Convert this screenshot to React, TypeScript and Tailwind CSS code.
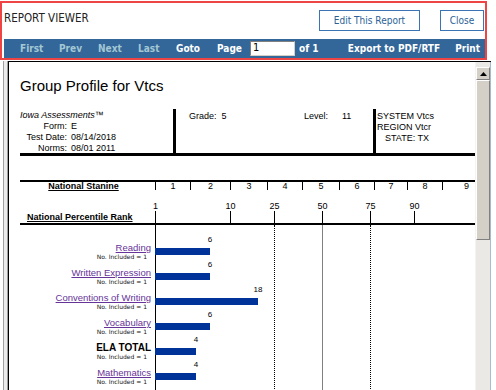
import React from "react";

const ui = "font-['DejaVu_Sans_Condensed','DejaVu_Sans',sans-serif] font-stretch-condensed";

const stanineCells = [
  { n: "1", w: 35 },
  { n: "2", w: 40 },
  { n: "3", w: 37 },
  { n: "4", w: 35 },
  { n: "5", w: 37 },
  { n: "6", w: 35 },
  { n: "7", w: 33 },
  { n: "8", w: 35 },
  { n: "9", w: 33 },
];

// x is the page position minus the left edge of the scale row (20px)
const percentileTicks = [
  { n: "1", x: 135 },
  { n: "10", x: 210 },
  { n: "25", x: 254 },
  { n: "50", x: 302 },
  { n: "75", x: 350 },
  { n: "90", x: 394 },
];

const scores = [
  { name: "Reading", value: 6, bar: 55, link: true },
  { name: "Written Expression", value: 6, bar: 55, link: true },
  { name: "Conventions of Writing", value: 18, bar: 103, link: true },
  { name: "Vocabulary", value: 6, bar: 55, link: true },
  { name: "ELA TOTAL", value: 4, bar: 41, link: false },
  { name: "Mathematics", value: 4, bar: 41, link: true },
];

const InfoRow = ({ label, value }: { label: string; value: string }) => (
  <div className="flex">
    <span className="w-[47px] text-right">{label}</span>
    <span className="pl-[4px]">{value}</span>
  </div>
);

const Toolbar = () => (
  <nav className={`ml-[2px] h-[19px] bg-[#336699] flex items-center text-[10px] font-bold ${ui}`}>
    <span className="ml-[16px] w-[39px] text-[#a3c8d4]">First</span>
    <span className="w-[39px] text-[#a3c8d4]">Prev</span>
    <span className="w-[40px] text-[#a3c8d4]">Next</span>
    <span className="w-[38px] text-[#a3c8d4]">Last</span>
    <span className="w-[41px] text-white">Goto</span>
    <span className="w-[33px] text-white">Page</span>
    <input
      defaultValue="1"
      className="w-[45px] h-[15px] bg-white border border-t-[#808080] border-l-[#808080] border-r-[#d4d0c8] border-b-[#d4d0c8] px-[2px] text-[11px] font-normal text-black outline-none"
    />
    <span className="ml-[4px] text-white">of 1</span>
    <span className="flex-1" />
    <span className="text-white">Export to PDF/RTF</span>
    <span className="ml-[15px] mr-[5px] text-white">Print</span>
  </nav>
);

const Scrollbar = () => (
  <div className="w-[15px] bg-[#ebe9e5] flex flex-col pt-[5px] border-l border-[#f4f3f1]">
    <div className="h-[13px] bg-[#d4d0c8] border border-t-white border-l-white border-r-[#808080] border-b-[#808080] flex items-center justify-center">
      <svg width="7" height="4" viewBox="0 0 7 4">
        <path d="M3.5 0 L7 4 L0 4 Z" fill="#000" />
      </svg>
    </div>
    <div className="h-[160px] bg-[#d4d0c8] border border-t-white border-l-white border-r-[#808080] border-b-[#808080]" />
  </div>
);

const Report = () => (
  <div className="w-[466px] h-[328px] relative overflow-hidden bg-white text-black font-['Liberation_Sans',Arial,sans-serif]">
    <div className="pt-[15px] pl-[11px] text-[15px] leading-[18px]">Group Profile for Vtcs</div>

    <div className="mt-[14px] ml-[11px] h-[47px] flex border-b-[3px] border-black text-[9px] leading-[11px]">
      <div className="w-[153px] pt-[1px]">
        <div className="italic">Iowa Assessments™</div>
        <InfoRow label="Form:" value="E" />
        <InfoRow label="Test Date:" value="08/14/2018" />
        <InfoRow label="Norms:" value="08/01 2011" />
      </div>
      <div className="w-[3px] bg-black" />
      <div className="w-[197px] pt-[2px] pl-[13px] flex">
        <span className="w-[115px]">Grade:&nbsp; 5</span>
        <span className="w-[38px]">Level:</span>
        <span>11</span>
      </div>
      <div className="w-[3px] bg-black" />
      <div className="flex-1 pl-[1px] pt-[2px]">
        <div>SYSTEM Vtcs</div>
        <div>REGION Vtcr</div>
        <div className="pl-[8px]">STATE: TX</div>
      </div>
    </div>

    <div className="mt-[24px] ml-[11px] border-t-2 border-black h-[10px] flex text-[9px] leading-[8px]">
      <div className="w-[127px] text-center font-bold underline">National Stanine</div>
      <div className="w-[8px]" />
      {stanineCells.map((c, i) => (
        <div
          key={c.n}
          className={`h-[8px] border-l border-black ${i === stanineCells.length - 1 ? "text-right pr-[6px]" : "text-center"}`}
          style={{ width: c.w }}
        >
          {c.n}
        </div>
      ))}
    </div>

    <div className="ml-[11px] h-[35px] relative border-b-2 border-black text-[9px] leading-[10px]">
      <div className="absolute left-[7px] top-[22px] font-bold underline">National Percentile Rank</div>
      {percentileTicks.map((t) => (
        <React.Fragment key={t.n}>
          <span className="absolute top-[11px] -translate-x-1/2" style={{ left: t.x + 0.5 }}>
            {t.n}
          </span>
          <div className="absolute top-[21px] h-[12px] w-px bg-black" style={{ left: t.x }} />
        </React.Fragment>
      ))}
    </div>

    <div className="relative h-[200px]">
      <div className="absolute left-[146px] top-0 bottom-0 w-px bg-black" />
      <div className="absolute left-[265px] top-0 bottom-0 border-l border-dotted border-black" />
      <div className="absolute left-[313px] top-0 bottom-0 w-px bg-[#808080]" />
      <div className="absolute left-[361px] top-0 bottom-0 border-l border-dotted border-black" />

      <div className="relative flex flex-col pt-[10px]">
        {scores.map((s) => (
          <div key={s.name} className="h-[25px] flex">
            <div className="w-[142px] flex flex-col items-end">
              <span
                className={`pt-[8px] leading-[10px] ${
                  s.link ? "text-[9.5px] text-[#663399] underline" : "text-[10px] font-bold text-black"
                }`}
              >
                {s.name}
              </span>
              <span className="pr-[4px] text-[6px] leading-[8px] text-[#111] font-['DejaVu_Sans',sans-serif]">
                No. Included = 1
              </span>
            </div>
            <div className="ml-[4px] flex flex-col">
              <div className="h-[13px] relative">
                <span className="absolute right-0 top-[1px] translate-x-1/2 text-[8px] leading-[8px]">
                  {s.value}
                </span>
              </div>
              <div className="h-[7px] bg-[#003399]" style={{ width: s.bar }} />
            </div>
          </div>
        ))}
      </div>
    </div>
  </div>
);

export default function App() {
  return (
    <div className="w-[496px] h-[390px] overflow-hidden bg-white">
      <header className="mt-[1px] w-[487px] h-[59px] border-2 border-[#ee4444] flex flex-col">
        <div className={`h-[36px] pb-[4px] pl-[2px] pr-[1px] flex items-center justify-between ${ui}`}>
          <span className="text-[11.5px] text-[#222]">REPORT VIEWER</span>
          <div className="flex items-center gap-[20px] pt-[2px]">
            <button className="h-[21px] w-[101px] border border-[#3a74b4] text-[10px] text-[#2b5f96] bg-white">
              Edit This Report
            </button>
            <button className="h-[21px] w-[44px] border border-[#3a74b4] text-[10px] text-[#2b5f96] bg-white">
              Close
            </button>
          </div>
        </div>
        <Toolbar />
      </header>

      <div className="mt-[1px] h-[329px] flex">
        <div className="w-[3px]" />
        <div className="w-[5px] border-l border-r border-[#a0a0a0] bg-[#ececec]" />
        <div className="border-l border-t border-black flex">
          <Report />
          <Scrollbar />
          <div className="w-px bg-[#a9bacb]" />
        </div>
      </div>
    </div>
  );
}
